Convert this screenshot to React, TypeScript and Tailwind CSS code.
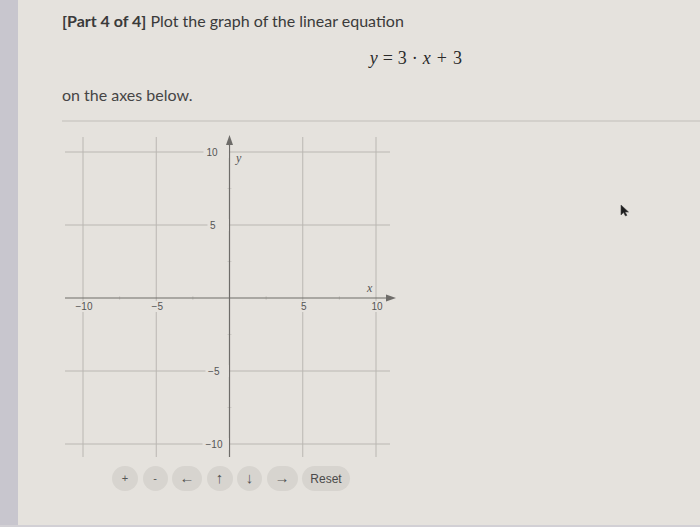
import React from 'react';

// grid geometry (local svg coords, origin at page 60,130)
const X0 = 169.5;
const Y0 = 169;
const SX = 14.65;
const SY = 14.6;
const px = (u: number) => X0 + SX * u;
const py = (u: number) => Y0 - SY * u;

const GRID = [-10, -5, 5, 10];
const BG = '#e5e2dd';

const Graph: React.FC = () => {
  return (
    <svg width={340} height={335} className="ml-[-2px] mt-[7px] block">
      {/* grid */}
      {GRID.map((u) => (
        <line key={`v${u}`} x1={px(u)} y1={8} x2={px(u)} y2={328} stroke="#bab7b2" strokeWidth={1} />
      ))}
      {GRID.map((u) => (
        <line key={`h${u}`} x1={5} y1={py(u)} x2={330} y2={py(u)} stroke="#bab7b2" strokeWidth={1} />
      ))}

      {/* faint minor ticks */}
      {[-7.5, -2.5, 2.5, 7.5].map((u) => (
        <g key={`t${u}`} stroke="#cfccc7" strokeWidth={1}>
          <line x1={px(u)} y1={Y0 - 2} x2={px(u)} y2={Y0 + 2} />
          <line x1={X0 - 2} y1={py(u)} x2={X0 + 2} y2={py(u)} />
        </g>
      ))}

      {/* axes */}
      <line x1={5} y1={Y0} x2={330} y2={Y0} stroke="#6e6c69" strokeWidth={1.2} />
      <polygon points={`336,${Y0} 326,${Y0 - 3.5} 326,${Y0 + 3.5}`} fill="#6e6c69" />
      <line x1={X0} y1={328} x2={X0} y2={12} stroke="#6e6c69" strokeWidth={1.2} />
      <polygon points={`${X0},6 ${X0 - 3.5},16 ${X0 + 3.5},16`} fill="#6e6c69" />

      {/* x labels */}
      {[
        [-10, '−10'],
        [-5, '−5'],
        [5, '5'],
        [10, '10'],
      ].map(([u, t]) => (
        <g key={`xl${u}`}>
          <rect x={px(u as number) - (String(t).length * 3 + 1)} y={Y0 + 3} width={String(t).length * 6 + 2} height={11} fill={BG} />
          <text
            x={px(u as number) + 1}
            y={Y0 + 12}
            textAnchor="middle"
            fontSize={10}
            fill="#555"
            fontFamily="'Liberation Sans', Arial, sans-serif"
          >
            {t}
          </text>
        </g>
      ))}

      {/* y labels */}
      {[
        [10, '10', 157.5],
        [5, '5', 155.5],
        [-5, '−5', 159.5],
        [-10, '−10', 162.5],
      ].map(([u, t, r]) => (
        <g key={`yl${u}`}>
          <rect
            x={(r as number) - String(t).length * 6 - 2}
            y={py(u as number) - 6}
            width={X0 - (r as number) + String(t).length * 6 + 1.4}
            height={12}
            fill={BG}
          />
          <text
            x={r as number}
            y={py(u as number) + 3.5}
            textAnchor="end"
            fontSize={10}
            fill="#555"
            fontFamily="'Liberation Sans', Arial, sans-serif"
          >
            {t}
          </text>
        </g>
      ))}

      {/* axis names */}
      <text x={176} y={33} fontSize={12} fontStyle="italic" fill="#555" fontFamily="'Liberation Serif', serif">
        y
      </text>
      <text x={307} y={163} fontSize={12} fontStyle="italic" fill="#555" fontFamily="'Liberation Serif', serif">
        x
      </text>
    </svg>
  );
};

const Btn: React.FC<{ w: string; children: React.ReactNode }> = ({ w, children }) => (
  <button
    className={`${w} flex h-[25px] items-center justify-center rounded-full bg-[#d7d4cf] text-[15px] text-[#555]`}
  >
    {children}
  </button>
);

const App: React.FC = () => {
  return (
    <div className="relative flex h-[527px] w-[700px] overflow-hidden border-b-2 border-[#d2d0d5] bg-[#e5e2dd] font-['Lato',sans-serif]">
      {/* left bezel strip */}
      <div className="w-[18px] shrink-0 bg-[#c8c6ce]" />

      <div className="flex-1 pt-[12px] pl-[44px]">
        <p className="text-[16px] leading-[18px] text-[#3a3a3a]">
          <span className="font-bold">[Part 4 of 4]</span> Plot the graph of the linear equation
        </p>

        <div className="mt-[17px] flex w-[400px] items-baseline justify-end font-['Liberation_Serif',serif] text-[18px] leading-[22px] text-[#2a2a2a]">
          <span className="italic">y</span>
          <span className="px-[5px]">=</span>
          <span>3</span>
          <span className="px-[5px]">·</span>
          <span className="italic">x</span>
          <span className="px-[6px]">+</span>
          <span>3</span>
        </div>

        <p className="mt-[17px] text-[16px] leading-[18px] text-[#454545]">on the axes below.</p>

        <div className="mt-[16px] h-[2px] bg-[#d3d0cb]" />

        <Graph />

        <div className="ml-[50px] mt-[2px] flex gap-[4.5px] font-['Liberation_Sans',sans-serif]">
          <Btn w="w-[26px]">
            <span className="text-[11px]">+</span>
          </Btn>
          <Btn w="w-[25px]">
            <span className="text-[11px]">-</span>
          </Btn>
          <Btn w="w-[30px]">←</Btn>
          <Btn w="w-[26px]">↑</Btn>
          <Btn w="w-[25px]">↓</Btn>
          <Btn w="w-[31px]">→</Btn>
          <Btn w="w-[48px]">
            <span className="text-[12px] text-[#4a4a4a]">Reset</span>
          </Btn>
        </div>
      </div>

      {/* mouse pointer */}
      <svg className="absolute left-[620px] top-[204px]" width="11" height="13" viewBox="0 0 11 13">
        <path d="M1 1 L1 11 L3.5 8.5 L5.5 12 L7 11.3 L5 8 L8.5 8 Z" fill="#1e1e1e" stroke="#444" strokeWidth="0.6" />
      </svg>
    </div>
  );
};

export default App;
